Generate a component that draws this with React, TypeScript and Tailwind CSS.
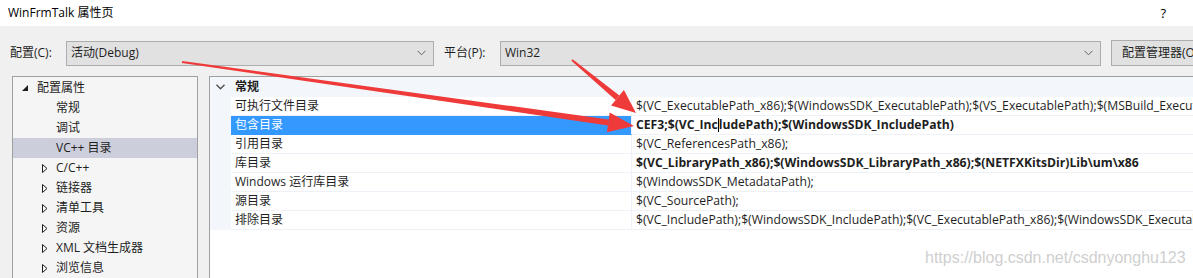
const ui = "font-['Open_Sans','Noto_Sans_CJK_SC',sans-serif]";

const Chevron = () => (
  <svg width="9" height="6" viewBox="0 0 9 6" className="shrink-0">
    <path d="M0.5 0.8 L4.5 4.8 L8.5 0.8" fill="none" stroke="#606060" strokeWidth="1" />
  </svg>
);

const treeItems = [
  { label: "配置属性", level: 0, expanded: true },
  { label: "常规", level: 1 },
  { label: "调试", level: 1 },
  { label: "VC++ 目录", level: 1, selected: true },
  { label: "C/C++", level: 1, collapsed: true },
  { label: "链接器", level: 1, collapsed: true },
  { label: "清单工具", level: 1, collapsed: true },
  { label: "资源", level: 1, collapsed: true },
  { label: "XML 文档生成器", level: 1, collapsed: true },
  { label: "浏览信息", level: 1, collapsed: true },
];

const props = [
  {
    name: "可执行文件目录",
    value: "$(VC_ExecutablePath_x86);$(WindowsSDK_ExecutablePath);$(VS_ExecutablePath);$(MSBuild_ExecutablePath);$(SystemRoot)\\SysWow64;$(FxCopDir);$(PATH);",
  },
  { name: "包含目录", value: "", selected: true, bold: true },
  { name: "引用目录", value: "$(VC_ReferencesPath_x86);" },
  {
    name: "库目录",
    value: "$(VC_LibraryPath_x86);$(WindowsSDK_LibraryPath_x86);$(NETFXKitsDir)Lib\\um\\x86",
    bold: true,
  },
  { name: "Windows 运行库目录", value: "$(WindowsSDK_MetadataPath);" },
  { name: "源目录", value: "$(VC_SourcePath);" },
  {
    name: "排除目录",
    value: "$(VC_IncludePath);$(WindowsSDK_IncludePath);$(VC_ExecutablePath_x86);$(WindowsSDK_ExecutablePath);$(VS_ExecutablePath);",
  },
];

const TreeNode = ({ item }: { item: (typeof treeItems)[number] }) => (
  <div
    className={`flex items-center h-[20px] ${item.selected ? "bg-[#cccedb]" : ""}`}
  >
    {item.level === 0 ? (
      <div className="w-[24px] flex justify-end pr-[9px]">
        <svg width="6" height="6" viewBox="0 0 6 6">
          <path d="M6 0 L6 6 L0 6 Z" fill="#1e1e1e" />
        </svg>
      </div>
    ) : (
      <div className="w-[43px] flex justify-end pr-[8px]">
        {item.collapsed && (
          <svg width="6" height="9" viewBox="0 0 6 9">
            <path d="M0.5 0.5 L5 4.5 L0.5 8.5 Z" fill="none" stroke="#1e1e1e" strokeWidth="1" />
          </svg>
        )}
      </div>
    )}
    <span className="text-[12px] leading-none text-[#1e1e1e] whitespace-nowrap">{item.label}</span>
  </div>
);

const Arrows = () => (
  <svg className="absolute inset-0 pointer-events-none" width="1193" height="278">
    <g fill="#ef3a3a">
      <polygon points="182.1,61 181.9,63 607.9,125.4 608.7,119.4" />
      <polygon points="634,126 609.7,112.5 606.9,132.3" />
      <polygon points="572.6,59.2 571.4,60.8 615.6,100 619.4,95.4" />
      <polygon points="636,113 623.9,90 611.1,105.4" />
    </g>
  </svg>
);

export default function App() {
  return (
    <div className={`relative w-[1193px] h-[278px] overflow-hidden bg-[#f0f0f0] text-[#1e1e1e] ${ui}`}>
      {/* title bar */}
      <div className="h-[26px] bg-white flex items-center justify-between pl-[8px] pr-[27px]">
        <span className="text-[12px] leading-none text-black">WinFrmTalk 属性页</span>
        <span className="text-[13px] leading-none text-black">?</span>
      </div>

      {/* config row */}
      <div className="flex items-center pt-[14px] pl-[10px] text-[12px] leading-none">
        <span className="w-[56px] shrink-0">配置(C):</span>
        <div className="w-[368px] h-[25px] shrink-0 bg-[#e1e1e1] border border-[#adadad] flex items-center justify-between pl-[4px] pr-[7px]">
          <span>活动(Debug)</span>
          <Chevron />
        </div>
        <span className="ml-[10px] w-[56px] shrink-0">平台(P):</span>
        <div className="w-[601px] h-[25px] shrink-0 bg-[#e1e1e1] border border-[#adadad] flex items-center justify-between pl-[4px] pr-[7px]">
          <span>Win32</span>
          <Chevron />
        </div>
        <div className="ml-[10px] h-[26px] w-[120px] shrink-0 bg-[#e1e1e1] border border-[#adadad] flex items-center pl-[10px] whitespace-nowrap">
          配置管理器(O)...
        </div>
      </div>

      {/* panels */}
      <div className="flex mt-[10px] pl-[12px]">
        <div className="w-[186px] h-[220px] shrink-0 bg-[#f5f5f5] border border-[#a0a0a0] pt-px">
          {treeItems.map((it) => (
            <TreeNode key={it.label} item={it} />
          ))}
        </div>

        <div className="ml-[11px] w-[1000px] h-[220px] shrink-0 bg-white border border-[#a0a0a0] text-[12px] leading-none">
          {/* category */}
          <div className="flex items-center h-[20px] bg-[#f3f6fb]">
            <div className="w-[21px] flex justify-center">
              <svg width="9" height="6" viewBox="0 0 9 6">
                <path d="M0.5 0.8 L4.5 4.8 L8.5 0.8" fill="none" stroke="#505050" strokeWidth="1.4" />
              </svg>
            </div>
            <span className="pl-[4px] font-bold">常规</span>
          </div>
          {props.map((p) => (
            <div key={p.name} className="flex h-[19px]">
              <div className="w-[21px] shrink-0 bg-[#f3f6fb]" />
              <div
                className={`w-[401px] shrink-0 flex items-center pl-[4px] border-b border-r border-[#eef1f7] ${
                  p.selected ? "bg-[#3399ff] text-white border-b-[#3399ff]" : ""
                }`}
              >
                {p.name}
              </div>
              <div
                className={`flex-1 flex items-center pl-[4px] border-b border-[#eef1f7] whitespace-nowrap overflow-hidden text-[12.2px] ${
                  p.bold ? "font-bold" : ""
                }`}
              >
                {p.selected ? (
                  <>
                    CEF3;$(VC_Inc
                    <span className="inline-block w-px h-[14px] bg-black" />
                    ludePath);$(WindowsSDK_IncludePath)
                  </>
                ) : (
                  p.value
                )}
              </div>
            </div>
          ))}
        </div>
      </div>

      {/* watermark */}
      <div className="absolute left-[925px] top-[250px] font-['Liberation_Sans',Arial,sans-serif] text-[16px] leading-none text-[#cfcfcf] whitespace-nowrap">
        https://blog.csdn.net/csdnyonghu123
      </div>

      <Arrows />
    </div>
  );
}
